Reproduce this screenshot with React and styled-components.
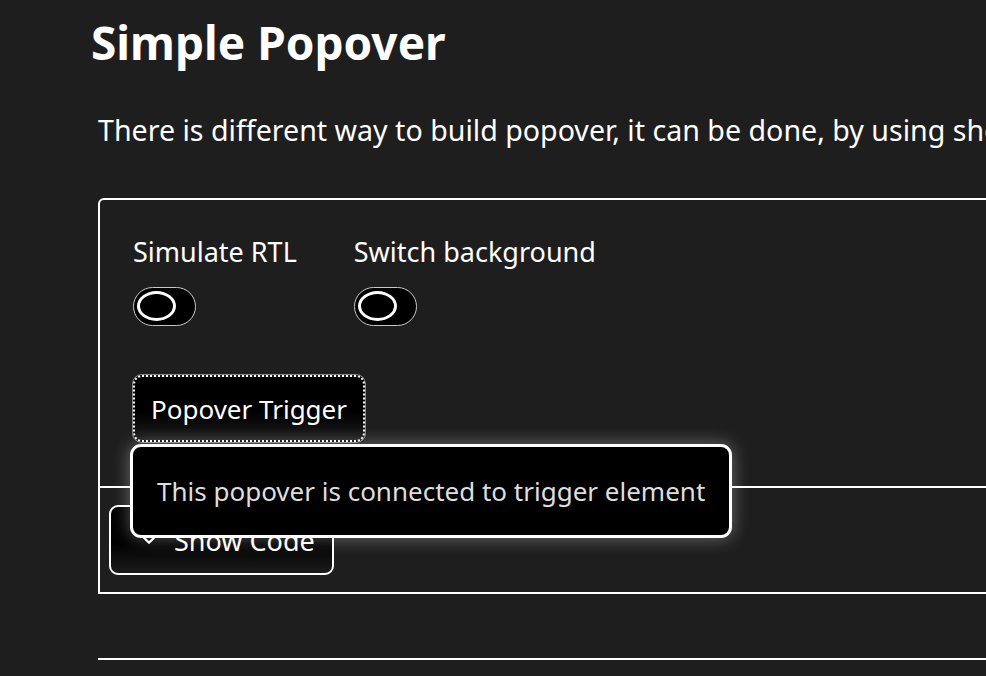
import styled, { createGlobalStyle } from "styled-components";
import { ChevronDown } from "lucide-react";

const GlobalStyle = createGlobalStyle`
  html, body {
    margin: 0;
    background: #1e1e1e;
    overflow: hidden;
  }
  body {
    font-family: "Noto Sans", "Liberation Sans", sans-serif;
    color: #fff;
  }
`;

const Page = styled.main`
  padding: 0 0 0 98px;
`;

const Title = styled.h1`
  margin: 11px 0 0 -7px;
  font-size: 46px;
  font-weight: 700;
  line-height: 62px;
`;

const Intro = styled.p`
  margin: 37px 0 0 0;
  font-size: 28.6px;
  line-height: 40px;
  white-space: nowrap;
`;

const Card = styled.section`
  margin-top: 48px;
  width: 1000px;
  border: 2px solid #fff;
  border-radius: 6px 0 0 0;
`;

const Preview = styled.div`
  padding: 34px 33px 44px;
  border-bottom: 2px solid #fff;
`;

const Controls = styled.div`
  display: flex;
  gap: 57px;
`;

const Control = styled.label`
  display: flex;
  flex-direction: column;
  gap: 17px;
  font-size: 27px;
  line-height: 36px;
`;

const Track = styled.span`
  position: relative;
  display: block;
  width: 61px;
  height: 37px;
  border-radius: 20px;
  background: #000;
  border: 1.5px solid #c8c8c8;
`;

const Knob = styled.span`
  position: absolute;
  left: 3px;
  top: 3px;
  width: 39px;
  height: 30px;
  border-radius: 50%;
  border: 3px solid #fff;
  box-sizing: border-box;
  background: #000;
`;

const Anchor = styled.div`
  position: relative;
  display: inline-block;
  margin-top: 49px;
`;

const Button = styled.button`
  display: flex;
  align-items: center;
  font-family: inherit;
  color: #fff;
  background: linear-gradient(#000 55%, #1c1c1c);
  border-radius: 9px;
  cursor: pointer;
`;

const TriggerButton = styled(Button)`
  height: 67px;
  padding: 0 16px;
  font-size: 26px;
  border: 2px dotted #fff;
  box-shadow: 0 0 0 1px #8a8a8a;
`;

const CodeButton = styled(Button)`
  gap: 14px;
  height: 70px;
  padding: 0 17px 0 27px;
  font-size: 27px;
  border: 2px solid #fff;
`;

const Popover = styled.div`
  position: absolute;
  top: calc(100% + 2px);
  left: -3px;
  z-index: 2;
  width: 602px;
  height: 94px;
  box-sizing: border-box;
  display: flex;
  align-items: center;
  padding-left: 24px;
  background: #000;
  border: 3px solid #fff;
  border-radius: 11px;
  box-shadow: 0 0 18px rgba(255, 255, 255, 0.35);
  color: #dedede;
  font-size: 26px;
  white-space: nowrap;
`;

const Footer = styled.div`
  padding: 17px 9px 17px;
`;

const Rule = styled.hr`
  margin: 64px 0 0;
  width: 1000px;
  border: 0;
  border-top: 2px solid #fff;
`;

function Switch({ label }) {
  return (
    <Control>
      {label}
      <Track>
        <Knob />
      </Track>
    </Control>
  );
}

export default function App() {
  return (
    <>
      <GlobalStyle />
      <Page>
        <Title>Simple Popover</Title>
        <Intro>
          There is different way to build popover, it can be done, by using
          showPopover method or by connecting it to a trigger element.
        </Intro>
        <Card>
          <Preview>
            <Controls>
              <Switch label="Simulate RTL" />
              <Switch label="Switch background" />
            </Controls>
            <Anchor>
              <TriggerButton>Popover Trigger</TriggerButton>
              <Popover>This popover is connected to trigger element</Popover>
            </Anchor>
          </Preview>
          <Footer>
            <CodeButton>
              <ChevronDown size={22} strokeWidth={2.5} />
              Show Code
            </CodeButton>
          </Footer>
        </Card>
        <Rule />
      </Page>
    </>
  );
}
